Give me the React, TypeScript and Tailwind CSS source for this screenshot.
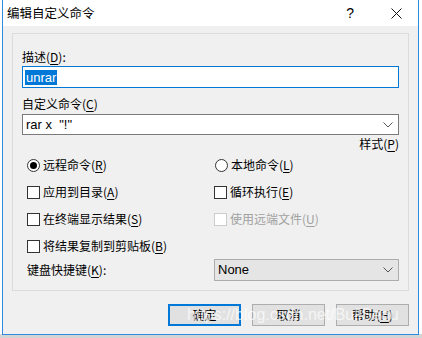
import React from "react";

const font = "font-['Microsoft_YaHei','Noto_Sans_CJK_SC',sans-serif]";

function Acc({ k }: { k: string }) {
  return (
    <span>
      (<span className="underline underline-offset-2">{k}</span>)
    </span>
  );
}

function Check({ label, k, disabled }: { label: string; k: string; disabled?: boolean }) {
  return (
    <div className={`flex items-center h-[16px] ${disabled ? "text-[#a0a0a0]" : "text-black"}`}>
      <div
        className={`w-[13px] h-[13px] bg-white border ${disabled ? "border-[#cccccc]" : "border-[#333333]"}`}
      />
      <span className="ml-[3px]">
        {label}
        <Acc k={k} />
      </span>
    </div>
  );
}

function Radio({ label, k, on }: { label: string; k: string; on?: boolean }) {
  return (
    <div className="flex items-center h-[16px]">
      <div className="w-[13px] h-[13px] rounded-full bg-white border border-[#333333] flex items-center justify-center">
        {on && <div className="w-[7px] h-[7px] rounded-full bg-black" />}
      </div>
      <span className="ml-[3px]">
        {label}
        <Acc k={k} />
      </span>
    </div>
  );
}

function Chevron() {
  return (
    <svg width="10" height="6" viewBox="0 0 10 6" className="mr-[3px]">
      <path d="M0.5 0.5 L5 5 L9.5 0.5" fill="none" stroke="#555" strokeWidth="1" />
    </svg>
  );
}

function Button({ children, primary }: { children: React.ReactNode; primary?: boolean }) {
  return (
    <div
      className={`w-[73px] h-[22px] flex items-center justify-center bg-[#e1e1e1] ${
        primary ? "border-2 border-[#0078d7]" : "border border-[#adadad]"
      }`}
    >
      {children}
    </div>
  );
}

export default function App() {
  return (
    <div className={`w-[422px] h-[338px] bg-white relative overflow-hidden text-[12px] leading-[16px] ${font}`}>
      <div className="absolute left-0 right-0 bottom-0 h-[4px] bg-[#d4d4d4]" />
      <div className="ml-[2px] w-[417px] h-[335px] border-x border-b border-[#2f8ae0] bg-[#f0f0f0] flex flex-col relative">
        {/* title bar */}
        <div className="h-[26px] bg-white flex items-center">
          <span className="ml-[4px] text-[12.5px]">编辑自定义命令</span>
          <span className="ml-auto mr-[37px] text-[14px] font-['Liberation_Sans',sans-serif]">?</span>
          <svg width="11" height="11" viewBox="0 0 11 11" className="mr-[16px]">
            <path d="M0.5 0.5 L10.5 10.5 M10.5 0.5 L0.5 10.5" stroke="#111" strokeWidth="1" />
          </svg>
        </div>

        {/* group box */}
        <div className="mx-[9px] mt-[7px] h-[258px] border border-[#dcdcdc] px-[9px] pt-[15px]">
          <div>
            描述<Acc k="D" />:
          </div>
          <div className="mt-[1px] h-[22px] border border-[#0078d7] bg-white flex items-center px-[2px]">
            <span className="bg-[#0078d7] text-white px-[1px] font-['Liberation_Sans',sans-serif] text-[13px] leading-[15px]">
              unrar
            </span>
          </div>

          <div className="mt-[8px]">
            自定义命令<Acc k="C" />
          </div>
          <div className="mt-[2px] h-[21px] border border-[#7a7a7a] bg-white flex items-center justify-between pl-[3px] pr-[2px]">
            <span className="font-['Liberation_Sans',sans-serif] text-[13px] whitespace-pre">rar x  "!"</span>
            <Chevron />
          </div>
          <div className="mt-[1px] text-right">
            样式<Acc k="P" />
          </div>

          <div className="mt-[5px] pl-[5px] grid grid-cols-[187px_1fr] gap-y-[11px]">
            <Radio label="远程命令" k="R" on />
            <div className="ml-[1px]">
              <Radio label="本地命令" k="L" />
            </div>
            <Check label="应用到目录" k="A" />
            <Check label="循环执行" k="E" />
            <Check label="在终端显示结果" k="S" />
            <Check label="使用远端文件" k="U" disabled />
            <Check label="将结果复制到剪贴板" k="B" />
          </div>

          <div className="mt-[5px] pl-[5px] flex items-center">
            <span className="w-[187px]">
              键盘快捷键<Acc k="K" />:
            </span>
            <div className="w-[185px] h-[22px] border border-[#adadad] bg-[#e5e5e5] flex items-center justify-between pl-[3px] pr-[2px]">
              <span className="font-['Liberation_Sans',sans-serif] text-[13px]">None</span>
              <Chevron />
            </div>
          </div>
        </div>

        {/* buttons */}
        <div className="mt-[13px] flex justify-end gap-[11px] mr-[9px]">
          <Button primary>确定</Button>
          <Button>取消</Button>
          <Button>
            帮助<Acc k="H" />
          </Button>
        </div>

        <span className="absolute left-[184px] top-[305px] text-[16px] leading-[20px] text-white/70 font-['Liberation_Sans',sans-serif] pointer-events-none">
          https://blog.csdn.net/BullSeau
        </span>
      </div>
    </div>
  );
}
